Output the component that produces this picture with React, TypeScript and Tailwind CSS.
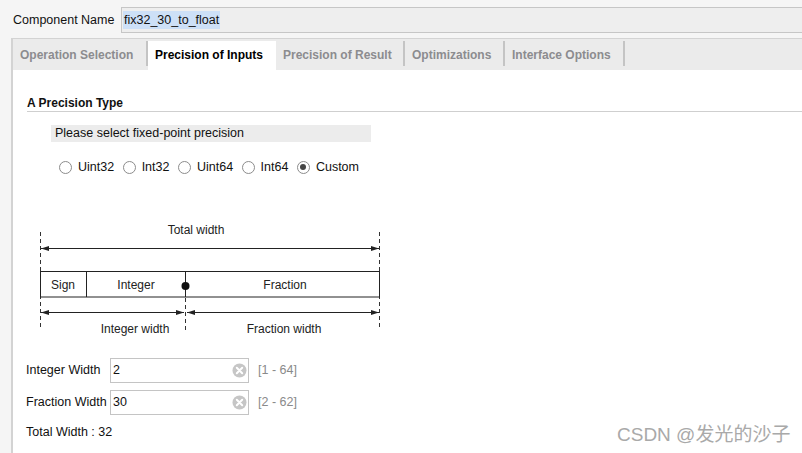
import React from "react";

const Radio = ({ label, checked }: { label: string; checked?: boolean }) => (
  <div className="flex items-center gap-[6px]">
    <div className="w-[13px] h-[13px] rounded-full border border-[#8c8c8c] bg-white flex items-center justify-center">
      {checked && <div className="w-[6px] h-[6px] rounded-full bg-[#454545]" />}
    </div>
    <span>{label}</span>
  </div>
);

const ClearIcon = () => (
  <svg width="15" height="15" viewBox="0 0 15 15">
    <circle cx="7.5" cy="7.5" r="7" fill="#c6c6c6" />
    <path d="M4.8 4.8 L10.2 10.2 M10.2 4.8 L4.8 10.2" stroke="#fff" strokeWidth="2" strokeLinecap="round" />
  </svg>
);

const Field = ({ label, value, range }: { label: string; value: string; range: string }) => (
  <div className="flex items-center h-[25px]">
    <span className="w-[84px]">{label}</span>
    <div className="w-[139px] h-[25px] border border-[#c4c4c4] bg-white flex items-center pl-[2px] pr-[1px]">
      <span className="flex-1">{value}</span>
      <ClearIcon />
    </div>
    <span className="ml-[9px] text-[#8a8a8a]">{range}</span>
  </div>
);

const Diagram = () => {
  const ox = 30;
  const oy = 215;
  const X = (x: number) => x - ox;
  const Y = (y: number) => y - oy;
  const arrow = (x1: number, x2: number, y: number) => (
    <g>
      <line x1={X(x1)} y1={Y(y)} x2={X(x2)} y2={Y(y)} stroke="#222" strokeWidth="1" />
      <polygon points={`${X(x1)},${Y(y)} ${X(x1) + 8},${Y(y) - 2.5} ${X(x1) + 8},${Y(y) + 2.5}`} fill="#222" />
      <polygon points={`${X(x2)},${Y(y)} ${X(x2) - 8},${Y(y) - 2.5} ${X(x2) - 8},${Y(y) + 2.5}`} fill="#222" />
    </g>
  );
  return (
    <svg width="370" height="125" className="block" style={{ fontFamily: "'Liberation Sans', Arial, sans-serif" }}>
      <line x1={X(40.5)} y1={Y(232)} x2={X(40.5)} y2={Y(330)} stroke="#333" strokeWidth="1" strokeDasharray="4 3" />
      <line x1={X(379.5)} y1={Y(232)} x2={X(379.5)} y2={Y(330)} stroke="#333" strokeWidth="1" strokeDasharray="4 3" />
      <line x1={X(185.5)} y1={Y(298)} x2={X(185.5)} y2={Y(330)} stroke="#333" strokeWidth="1" strokeDasharray="4 3" />
      <text x={X(196)} y={Y(234)} textAnchor="middle" fontSize="12" fill="#222">Total width</text>
      {arrow(41, 379, 248.5)}
      <rect x={X(40.5)} y={Y(271.5)} width={339} height={25.5} fill="none" stroke="#222" strokeWidth="1" />
      <line x1={X(86.5)} y1={Y(271.5)} x2={X(86.5)} y2={Y(297)} stroke="#222" />
      <line x1={X(185.5)} y1={Y(271.5)} x2={X(185.5)} y2={Y(297)} stroke="#222" />
      <circle cx={X(185.5)} cy={Y(286)} r="4" fill="#111" />
      <text x={X(63)} y={Y(289)} textAnchor="middle" fontSize="12" fill="#222">Sign</text>
      <text x={X(136)} y={Y(289)} textAnchor="middle" fontSize="12" fill="#222">Integer</text>
      <text x={X(285)} y={Y(289)} textAnchor="middle" fontSize="12" fill="#222">Fraction</text>
      {arrow(41, 184, 312.5)}
      {arrow(187, 379, 312.5)}
      <text x={X(135)} y={Y(333)} textAnchor="middle" fontSize="12" fill="#222">Integer width</text>
      <text x={X(284)} y={Y(333)} textAnchor="middle" fontSize="12" fill="#222">Fraction width</text>
    </svg>
  );
};

export default function App() {
  const tabs = [
    { label: "Operation Selection", w: "w-[135px]", sep: true },
    { label: "Precision of Inputs", w: "w-[128px]", active: true },
    { label: "Precision of Result", w: "w-[129px]", sep: true },
    { label: "Optimizations", w: "w-[100px]", sep: true },
    { label: "Interface Options", w: "w-[120px]", sep: true },
  ];
  return (
    <div className="w-[802px] h-[453px] bg-[#f5f5f5] relative overflow-hidden text-[12.5px] text-[#111] font-['Liberation_Sans',Arial,sans-serif]">
      <div className="flex items-center pt-[7px] pl-[13px]">
        <span className="w-[108px]">Component Name</span>
        <div className="flex-1 h-[26px] border border-[#c6c6c6] border-r-0 bg-[#eeeeee] flex items-center pl-[1px]">
          <span className="bg-[#cde0f7] px-[1px] leading-[18px]">fix32_30_to_float</span>
        </div>
      </div>
      <div className="mt-[5px] ml-[11px] border-t border-l-2 border-[#d3d3d3] h-[415px] flex flex-col">
        <div className="h-[31px] bg-[#ebebeb] flex items-end">
          {tabs.map((t) => (
            <div key={t.label} className={`${t.w} h-[29px] flex items-center ${t.active ? "bg-white" : ""}`}>
              <span className={`pl-[7px] flex-1 font-bold text-[12px] pb-[2px] ${t.active ? "text-black" : "text-[#8c8c8f]"}`}>{t.label}</span>
              {t.sep && <div className="w-[2px] h-[25px] mb-[4px] bg-[#c4c4c4]" />}
            </div>
          ))}
        </div>
        <div className="flex-1 bg-white pl-[14px]">
          <div className="pt-[26px] border-b border-[#cfcfcf] font-bold text-[12px] leading-[15px]">A Precision Type</div>
          <div className="ml-[24px] mt-[13px] w-[320px] h-[17px] bg-[#ececec] pl-[4px] flex items-center">Please select fixed-point precision</div>
          <div className="ml-[32px] mt-[17px] flex items-center gap-[8.5px] h-[16px]">
            <Radio label="Uint32" />
            <Radio label="Int32" />
            <Radio label="Uint64" />
            <Radio label="Int64" />
            <Radio label="Custom" checked />
          </div>
          <div className="ml-[3px] mt-[40px]">
            <Diagram />
          </div>
          <div className="ml-[-1px] mt-[18px] flex flex-col gap-[7px]">
            <Field label="Integer Width" value="2" range="[1 - 64]" />
            <Field label="Fraction Width" value="30" range="[2 - 62]" />
          </div>
          <div className="ml-[-1px] mt-[8px]">Total Width : 32</div>
        </div>
      </div>
      <div className="absolute left-[617px] top-[424px] text-[19px] leading-[22px] text-[#a9a9a9] font-['Liberation_Sans','Noto_Sans_CJK_SC',sans-serif]">
        CSDN @发光的沙子
      </div>
    </div>
  );
}
